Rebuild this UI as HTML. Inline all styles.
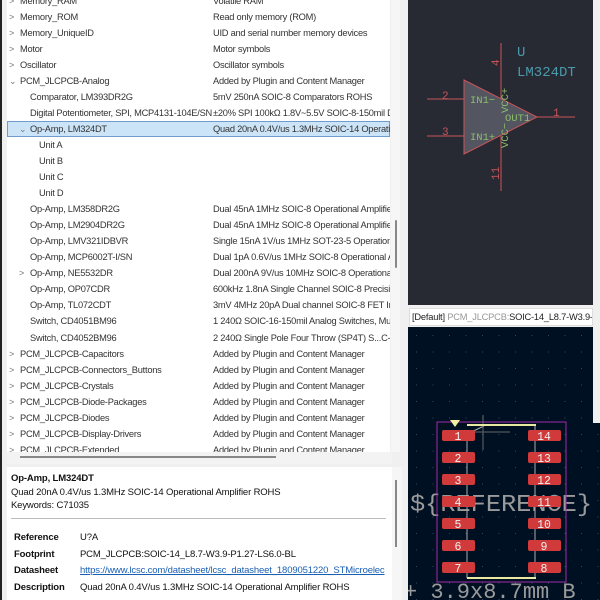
<!DOCTYPE html>
<html><head><style>
*{margin:0;padding:0;box-sizing:border-box}
body{width:600px;height:600px;overflow:hidden;background:#f0f0f0;font-family:"Liberation Sans",sans-serif;position:relative}
.abs{position:absolute}
.list{left:7px;top:0;width:383px;height:452px;background:#fff;overflow:hidden}
.r{position:absolute;left:0;width:383px;height:16px;font-size:9.3px;letter-spacing:-0.25px;color:#333;line-height:16px;white-space:nowrap}
.r span{position:absolute}
.r .d{left:206px}
.ch{color:#777;font-size:9px}
</style></head><body>
<div class="abs" style="left:0;top:0;width:2px;height:600px;background:#222"></div>
<div class="abs list" id="L"></div>
<div class="abs" style="left:391px;top:0;width:9px;height:452px;background:#f6f6f6"></div>
<div class="abs" style="left:395px;top:220px;width:2px;height:48px;background:#888;border-radius:1px"></div>
<div class="abs" style="left:7px;top:452px;width:385px;height:12px;background:#f3f3f3"></div>
<div class="abs" style="left:20px;top:456px;width:256px;height:2px;background:#888"></div>
<div class="abs" style="left:7px;top:467px;width:385px;height:133px;background:#fff;font-size:9.5px;letter-spacing:-0.15px;color:#111;white-space:nowrap;overflow:hidden">
 <div class="abs" style="left:4px;top:6px;font-weight:bold">Op-Amp, LM324DT</div>
 <div class="abs" style="left:4px;top:20px">Quad 20nA 0.4V/us 1.3MHz SOIC-14 Operational Amplifier ROHS</div>
 <div class="abs" style="left:4px;top:33px">Keywords: C71035</div>
 <div class="abs" style="left:4px;top:51px;width:375px;height:1px;background:#bbb"></div>
 <div class="abs" style="left:7px;top:65px;font-weight:bold">Reference</div><div class="abs" style="left:73px;top:65px">U?A</div>
 <div class="abs" style="left:7px;top:82px;font-weight:bold">Footprint</div><div class="abs" style="left:73px;top:82px">PCM_JLCPCB:SOIC-14_L8.7-W3.9-P1.27-LS6.0-BL</div>
 <div class="abs" style="left:7px;top:98px;font-weight:bold">Datasheet</div><div class="abs" style="left:73px;top:98px;color:#1a5fb4;text-decoration:underline">https://www.lcsc.com/datasheet/lcsc_datasheet_1809051220_STMicroelec</div>
 <div class="abs" style="left:7px;top:115px;font-weight:bold">Description</div><div class="abs" style="left:73px;top:115px">Quad 20nA 0.4V/us 1.3MHz SOIC-14 Operational Amplifier ROHS</div>
</div>
<div class="abs" style="left:392px;top:467px;width:10px;height:133px;background:#f6f6f6"></div>
<div class="abs" style="left:395px;top:480px;width:2px;height:67px;background:#888"></div>
<div class="abs" style="left:402px;top:0;width:6px;height:600px;background:#f0f0f0"></div>

<svg class="abs" style="left:408px;top:0" width="185" height="305">
<rect width="185" height="305" fill="#272a33"/>
<g transform="translate(-408,0)" font-family="Liberation Mono,monospace">
<line x1="501" y1="43" x2="501" y2="191" stroke="#c8545a" stroke-width="1"/>
<line x1="427" y1="99" x2="464" y2="99" stroke="#c8545a"/>
<line x1="427" y1="136" x2="464" y2="136" stroke="#c8545a"/>
<line x1="537" y1="117" x2="575" y2="117" stroke="#c8545a"/>
<polygon points="464,80 464,154 537,117" fill="#535560" stroke="#c8545a"/>
<text x="517" y="56" fill="#4a9aab" font-size="14">U</text>
<text x="517" y="76" fill="#4a9aab" font-size="14">LM324DT</text>
<text x="442" y="99" fill="#c8545a" font-size="11">2</text>
<text x="442" y="135" fill="#c8545a" font-size="11">3</text>
<text x="553" y="116" fill="#c8545a" font-size="11">1</text>
<text transform="translate(499,66) rotate(-90)" fill="#c8545a" font-size="11">4</text>
<text transform="translate(499,180) rotate(-90)" fill="#c8545a" font-size="11">11</text>
<text x="470" y="103" fill="#8cbf6e" font-size="10.5">IN1−</text>
<text x="470" y="140" fill="#8cbf6e" font-size="10.5">IN1+</text>
<text x="505" y="121" fill="#8cbf6e" font-size="10.5">OUT1</text>
<text transform="translate(508,113) rotate(-90)" fill="#8cbf6e" font-size="10.5">VCC+</text>
<text transform="translate(508,148) rotate(-90)" fill="#8cbf6e" font-size="10.5">VCC−</text>
</g></svg>
<div class="abs" style="left:593px;top:0;width:7px;height:423px;background:#f0f0f0"></div>

<div class="abs" style="left:409px;top:308px;width:184px;height:18px;background:#fff;border:1px solid #ddd;font-size:9.3px;letter-spacing:-0.2px;line-height:16px;padding-left:2px;white-space:nowrap;overflow:hidden;color:#222">[Default] <span style="color:#999">PCM_JLCPCB:</span>SOIC-14_L8.7-W3.9-P1 <span style="color:#777">⌄</span></div>

<svg class="abs" style="left:408px;top:327px" width="192" height="273">
<defs><pattern id="g" width="16.5" height="16.5" patternUnits="userSpaceOnUse"><rect x="8" y="8" width="1" height="1" fill="#3a4660"/></pattern></defs>
<rect width="192" height="273" fill="#001023"/><rect width="192" height="273" fill="url(#g)"/>
<rect x="185" y="0" width="7" height="96" fill="#f0f0f0"/>
<g transform="translate(-408,-327)" font-family="Liberation Mono,monospace">
<text x="410" y="511" fill="#9a9a9a" font-size="24.5" textLength="182" lengthAdjust="spacingAndGlyphs">${REFERENCE}</text>
<rect x="437" y="422" width="129" height="160" fill="none" stroke="#a02aa8" stroke-width="1"/>
<line x1="467" y1="434" x2="467" y2="578" stroke="#aaa"/>
<line x1="535" y1="426" x2="535" y2="578" stroke="#aaa"/>
<line x1="467" y1="434" x2="484" y2="426" stroke="#aaa"/>
<line x1="483" y1="415" x2="483" y2="450" stroke="#666"/>
<line x1="470" y1="432" x2="510" y2="432" stroke="#666"/>
<line x1="467" y1="425" x2="536" y2="425" stroke="#e8e8a0" stroke-width="2"/>
<line x1="467" y1="578" x2="536" y2="578" stroke="#e8e8a0" stroke-width="2"/>
<polygon points="450,420 460,420 455,427" fill="#f0f0a0"/>
<g fill="#d03a3a">
<rect x="442" y="430" width="33" height="11" rx="2"/><rect x="442" y="452" width="33" height="11" rx="2"/><rect x="442" y="474" width="33" height="11" rx="2"/><rect x="442" y="496" width="33" height="11" rx="2"/><rect x="442" y="518" width="33" height="11" rx="2"/><rect x="442" y="540" width="33" height="11" rx="2"/><rect x="442" y="562" width="33" height="11" rx="2"/>
<rect x="528" y="430" width="33" height="11" rx="2"/><rect x="528" y="452" width="33" height="11" rx="2"/><rect x="528" y="474" width="33" height="11" rx="2"/><rect x="528" y="496" width="33" height="11" rx="2"/><rect x="528" y="518" width="33" height="11" rx="2"/><rect x="528" y="540" width="33" height="11" rx="2"/><rect x="528" y="562" width="33" height="11" rx="2"/>
</g>
<g fill="#f0f0f0" font-size="11.5" text-anchor="middle">
<text x="458" y="440">1</text><text x="458" y="462">2</text><text x="458" y="484">3</text><text x="458" y="506">4</text><text x="458" y="528">5</text><text x="458" y="550">6</text><text x="458" y="572">7</text>
<text x="544" y="440">14</text><text x="544" y="462">13</text><text x="544" y="484">12</text><text x="544" y="506">11</text><text x="544" y="528">10</text><text x="544" y="550">9</text><text x="544" y="572">8</text>
</g>
<text x="404" y="598" fill="#9a9a9a" font-size="22">+ 3.9x8.7mm B</text>
</g></svg>

<script>
var rows=[
[-7,0,1,"Memory_RAM","Volatile RAM"],[9,0,1,"Memory_ROM","Read only memory (ROM)"],[25,0,1,"Memory_UniqueID","UID and serial number memory devices"],[41,0,1,"Motor","Motor symbols"],[57,0,1,"Oscillator","Oscillator symbols"],[73,0,2,"PCM_JLCPCB-Analog","Added by Plugin and Content Manager"],
[89,1,0,"Comparator, LM393DR2G","5mV 250nA SOIC-8 Comparators ROHS"],[105,1,0,"Digital Potentiometer, SPI, MCP4131-104E/SN","±20% SPI 100kΩ 1.8V~5.5V SOIC-8-150mil Digital Potentiometers"],
[121,1,2,"Op-Amp, LM324DT","Quad 20nA 0.4V/us 1.3MHz SOIC-14 Operational Amplifier"],
[137,2,0,"Unit A",""],[153,2,0,"Unit B",""],[169,2,0,"Unit C",""],[185,2,0,"Unit D",""],
[201,1,0,"Op-Amp, LM358DR2G","Dual 45nA 1MHz SOIC-8 Operational Amplifier"],[217,1,0,"Op-Amp, LM2904DR2G","Dual 45nA 1MHz SOIC-8 Operational Amplifier"],[233,1,0,"Op-Amp, LMV321IDBVR","Single 15nA 1V/us 1MHz SOT-23-5 Operational"],[249,1,0,"Op-Amp, MCP6002T-I/SN","Dual 1pA 0.6V/us 1MHz SOIC-8 Operational Amp"],[265,1,1,"Op-Amp, NE5532DR","Dual 200nA 9V/us 10MHz SOIC-8 Operational Amp"],[281,1,0,"Op-Amp, OP07CDR","600kHz 1.8nA Single Channel SOIC-8 Precision"],[297,1,0,"Op-Amp, TL072CDT","3mV 4MHz 20pA Dual channel SOIC-8 FET Input"],[313,1,0,"Switch, CD4051BM96","1 240Ω SOIC-16-150mil Analog Switches, Multi"],[330,1,0,"Switch, CD4052BM96","2 240Ω Single Pole Four Throw (SP4T) S...C-16 A"],
[346,0,1,"PCM_JLCPCB-Capacitors","Added by Plugin and Content Manager"],[362,0,1,"PCM_JLCPCB-Connectors_Buttons","Added by Plugin and Content Manager"],[378,0,1,"PCM_JLCPCB-Crystals","Added by Plugin and Content Manager"],[394,0,1,"PCM_JLCPCB-Diode-Packages","Added by Plugin and Content Manager"],[410,0,1,"PCM_JLCPCB-Diodes","Added by Plugin and Content Manager"],[426,0,1,"PCM_JLCPCB-Display-Drivers","Added by Plugin and Content Manager"],[442,0,1,"PCM_JLCPCB-Extended","Added by Plugin and Content Manager"]];
var h="";
rows.forEach(function(r){
 var x=13+r[1]*10; if(r[1]==2)x=32;
 var sel=r[3]=="Op-Amp, LM324DT";
 var st=sel?"background:#cce4f7;border:1px solid #6f9ccc;line-height:14px;":"";
 h+='<div class="r" style="top:'+r[0]+'px;'+st+'">';
 if(r[2])h+='<span class="ch" style="left:'+(x-(sel?12:11))+'px">'+(r[2]==2?'&#8964;':'&gt;')+'</span>';
 h+='<span style="left:'+(sel?x-1:x)+'px">'+r[3]+'</span><span class="d" style="left:'+(sel?205:206)+'px">'+r[4]+'</span></div>';
});
document.getElementById("L").innerHTML=h;
</script>
</body></html>
